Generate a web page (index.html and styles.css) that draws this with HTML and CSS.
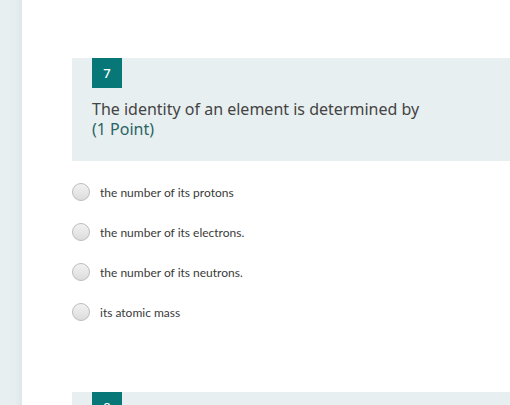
FILE: index.html
```html
<!DOCTYPE html>
<html>
<head>
<meta charset="utf-8">
<link rel="stylesheet" href="styles.css">
</head>
<body>
<div class="page">
  <aside class="rail"></aside>
  <main class="content">
    <section class="question">
      <div class="q-head">
        <div class="badge">7</div>
        <div class="q-title">The identity of an element is determined by</div>
        <div class="q-points">(1 Point)</div>
      </div>
      <ul class="options">
        <li class="option"><span class="radio"></span><span class="label">the number of its protons</span></li>
        <li class="option"><span class="radio"></span><span class="label">the number of its electrons.</span></li>
        <li class="option"><span class="radio"></span><span class="label">the number of its neutrons.</span></li>
        <li class="option"><span class="radio"></span><span class="label">its atomic mass</span></li>
      </ul>
    </section>
    <section class="question">
      <div class="q-head">
        <div class="badge">8</div>
      </div>
    </section>
  </main>
</div>
</body>
</html>
```
FILE: styles.css
```css
html, body {
  margin: 0;
  padding: 0;
  background: #ffffff;
  overflow: hidden;
}
body {
  font-family: "Noto Sans", "Open Sans", sans-serif;
  width: 510px;
  height: 405px;
}
.page {
  display: flex;
  height: 405px;
  overflow: hidden;
}
.rail {
  width: 22px;
  flex: none;
  background: linear-gradient(to right, #e8eff1 0, #e6eef0 15px, #dde6e9 22px);
}
.content {
  flex: 1;
  padding: 58px 0 0 50px;
  min-width: 0;
}
.question {
  margin-bottom: 60px;
}
.q-head {
  background: #e8eff1;
  padding: 0 0 22px 20px;
}
.badge {
  width: 30px;
  height: 30px;
  background: #077877;
  color: #ffffff;
  font-size: 13px;
  font-weight: 500;
  display: flex;
  align-items: center;
  justify-content: center;
  margin-bottom: 11px;
}
.q-title {
  font-size: 16px;
  line-height: 20px;
  color: #444444;
}
.q-points {
  font-size: 16px;
  line-height: 20px;
  color: #2a6463;
}
.options {
  list-style: none;
  margin: 0;
  padding: 11px 0 0 0;
}
.option {
  display: flex;
  align-items: center;
  height: 40px;
}
.radio {
  width: 16px;
  height: 16px;
  border-radius: 50%;
  border: 1px solid #bcbcbc;
  background: linear-gradient(#f2f2f2, #dcdcdc);
  margin-right: 10px;
  flex: none;
}
.label {
  font-family: "Lato", "Noto Sans", sans-serif;
  font-size: 12px;
  color: #3a3a3a;
}
```
